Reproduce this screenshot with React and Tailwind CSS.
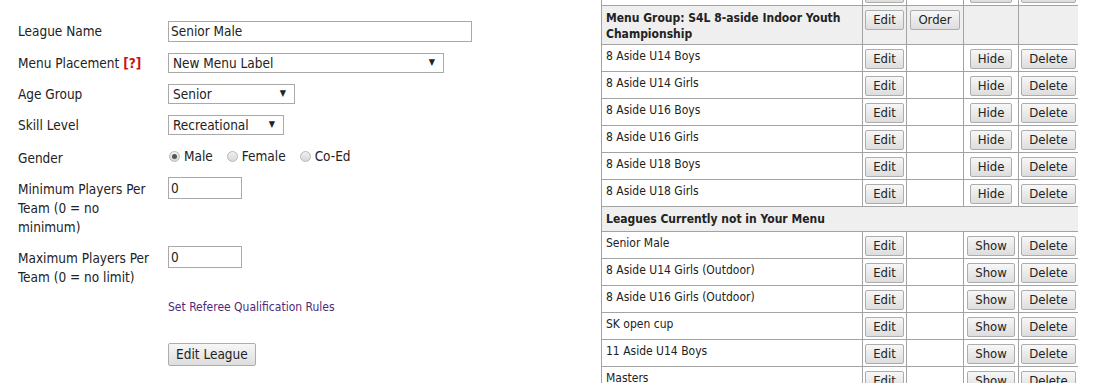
const font = { fontFamily: '"DejaVu Sans Condensed", "Noto Sans", sans-serif' };

function Btn({ children, className = "" }) {
  return (
    <button
      type="button"
      className={`inline-block align-top h-[20px] px-[7px] border border-[#adadad] rounded-[2px] bg-gradient-to-b from-[#f7f7f7] to-[#dddddd] text-[13px] leading-[18px] text-[#222] ${className}`}
    >
      {children}
    </button>
  );
}

function Select({ value, w }) {
  return (
    <div className={`${w} h-[20px] border border-[#a9a9a9] bg-white flex items-center justify-between pl-[4px] pr-[8px] text-[13.5px] text-[#222]`}>
      <span>{value}</span>
      <span className="text-[9px]">▼</span>
    </div>
  );
}

function Radio({ checked, label }) {
  return (
    <label className="flex items-center gap-[4px] mr-[14px]">
      <span className="w-[11px] h-[11px] rounded-full border border-[#b8b8b8] bg-gradient-to-b from-[#f0f0f0] to-[#d8d8d8] flex items-center justify-center">
        {checked && <span className="w-[5px] h-[5px] rounded-full bg-[#555]" />}
      </span>
      <span className="text-[13.5px] text-[#222]">{label}</span>
    </label>
  );
}

const menuRows = [
  "8 Aside U14 Boys",
  "8 Aside U14 Girls",
  "8 Aside U16 Boys",
  "8 Aside U16 Girls",
  "8 Aside U18 Boys",
  "8 Aside U18 Girls",
];

const hiddenRows = [
  "Senior Male",
  "8 Aside U14 Girls (Outdoor)",
  "8 Aside U16 Girls (Outdoor)",
  "SK open cup",
  "11 Aside U14 Boys",
  "Masters",
];

const td = "border border-[#a3a3a3] align-top pt-[4px] pb-[2px]";

function LeagueRow({ name, action }) {
  return (
    <tr>
      <td className={`${td} px-[4px] leading-[14px]`}>{name}</td>
      <td className={`${td} text-center leading-[20px]`}><Btn>Edit</Btn></td>
      <td className={td}></td>
      <td className={`${td} text-center leading-[20px]`}><Btn>{action}</Btn></td>
      <td className={`${td} text-center leading-[20px]`}><Btn>Delete</Btn></td>
    </tr>
  );
}

export default function App() {
  return (
    <div className="flex w-[1093px] h-[383px] overflow-hidden bg-white text-[#222]" style={font}>
      <div className="w-[601px] shrink-0 pl-[18px] pt-[21px] flex flex-col">
        <div className="flex items-center h-[21px]">
          <div className="w-[150px] text-[13.5px]">League Name</div>
          <div className="w-[304px] h-[21px] border border-[#a9a9a9] px-[2px] text-[13.5px] leading-[19px]">Senior Male</div>
        </div>
        <div className="flex items-center h-[20px] mt-[11px]">
          <div className="w-[150px] text-[13.5px]">
            Menu Placement <span className="text-[#cc1111] font-bold">[?]</span>
          </div>
          <Select value="New Menu Label" w="w-[276px]" />
        </div>
        <div className="flex items-center h-[20px] mt-[11px]">
          <div className="w-[150px] text-[13.5px]">Age Group</div>
          <Select value="Senior" w="w-[127px]" />
        </div>
        <div className="flex items-center h-[20px] mt-[11px]">
          <div className="w-[150px] text-[13.5px]">Skill Level</div>
          <Select value="Recreational" w="w-[116px]" />
        </div>
        <div className="flex items-center h-[21px] mt-[11px]">
          <div className="w-[150px] text-[13.5px] pt-[3px]">Gender</div>
          <div className="flex items-center pl-[1px]">
            <Radio checked label="Male" />
            <Radio label="Female" />
            <Radio label="Co-Ed" />
          </div>
        </div>
        <div className="flex items-start mt-[10px]">
          <div className="w-[150px] text-[13.5px] leading-[19px] pt-[3px] pr-[12px]">
            Minimum Players Per Team (0 = no minimum)
          </div>
          <div className="w-[74px] h-[22px] border border-[#a9a9a9] px-[2px] text-[13.5px] leading-[20px]">0</div>
        </div>
        <div className="flex items-start mt-[9px]">
          <div className="w-[150px] text-[13.5px] leading-[19px] pt-[3px] pr-[12px]">
            Maximum Players Per Team (0 = no limit)
          </div>
          <div className="w-[74px] h-[22px] border border-[#a9a9a9] px-[2px] text-[13.5px] leading-[20px]">0</div>
        </div>
        <div className="pl-[150px] mt-[7px]">
          <a href="#" className="text-[12px] leading-[16px] text-[#4e2a78]">Set Referee Qualification Rules</a>
        </div>
        <div className="pl-[150px] mt-[24px]">
          <button
            type="button"
            className="h-[23px] px-[7px] border border-[#adadad] rounded-[2px] bg-gradient-to-b from-[#f7f7f7] to-[#dddddd] text-[13.5px] leading-[20px] text-[#222]"
          >
            Edit League
          </button>
        </div>
      </div>

      <div className="w-[477px] shrink-0 h-[383px] overflow-hidden">
        <table className="w-[477px] table-fixed border-collapse text-[12px] -mt-[22px]">
          <colgroup>
            <col className="w-[261px]" />
            <col className="w-[44px]" />
            <col className="w-[57px]" />
            <col className="w-[55px]" />
            <col className="w-[60px]" />
          </colgroup>
          <tbody>
            <LeagueRow name="8 Aside U12 Boys" action="Hide" />
            <tr className="bg-[#efefef]">
              <td className={`${td} px-[4px] font-bold leading-[16px]`}>
                Menu Group: S4L 8-aside Indoor Youth Championship
              </td>
              <td className={`${td} text-center leading-[20px]`}><Btn>Edit</Btn></td>
              <td className={`${td} text-center leading-[20px]`}><Btn>Order</Btn></td>
              <td className={td}></td>
              <td className={td}></td>
            </tr>
            {menuRows.map((n) => (
              <LeagueRow key={n} name={n} action="Hide" />
            ))}
            <tr className="bg-[#efefef]">
              <td colSpan={5} className="border border-[#a3a3a3] px-[4px] pt-[4px] pb-[4px] font-bold leading-[16px]">
                Leagues Currently not in Your Menu
              </td>
            </tr>
            {hiddenRows.map((n) => (
              <LeagueRow key={n} name={n} action="Show" />
            ))}
          </tbody>
        </table>
      </div>
    </div>
  );
}
